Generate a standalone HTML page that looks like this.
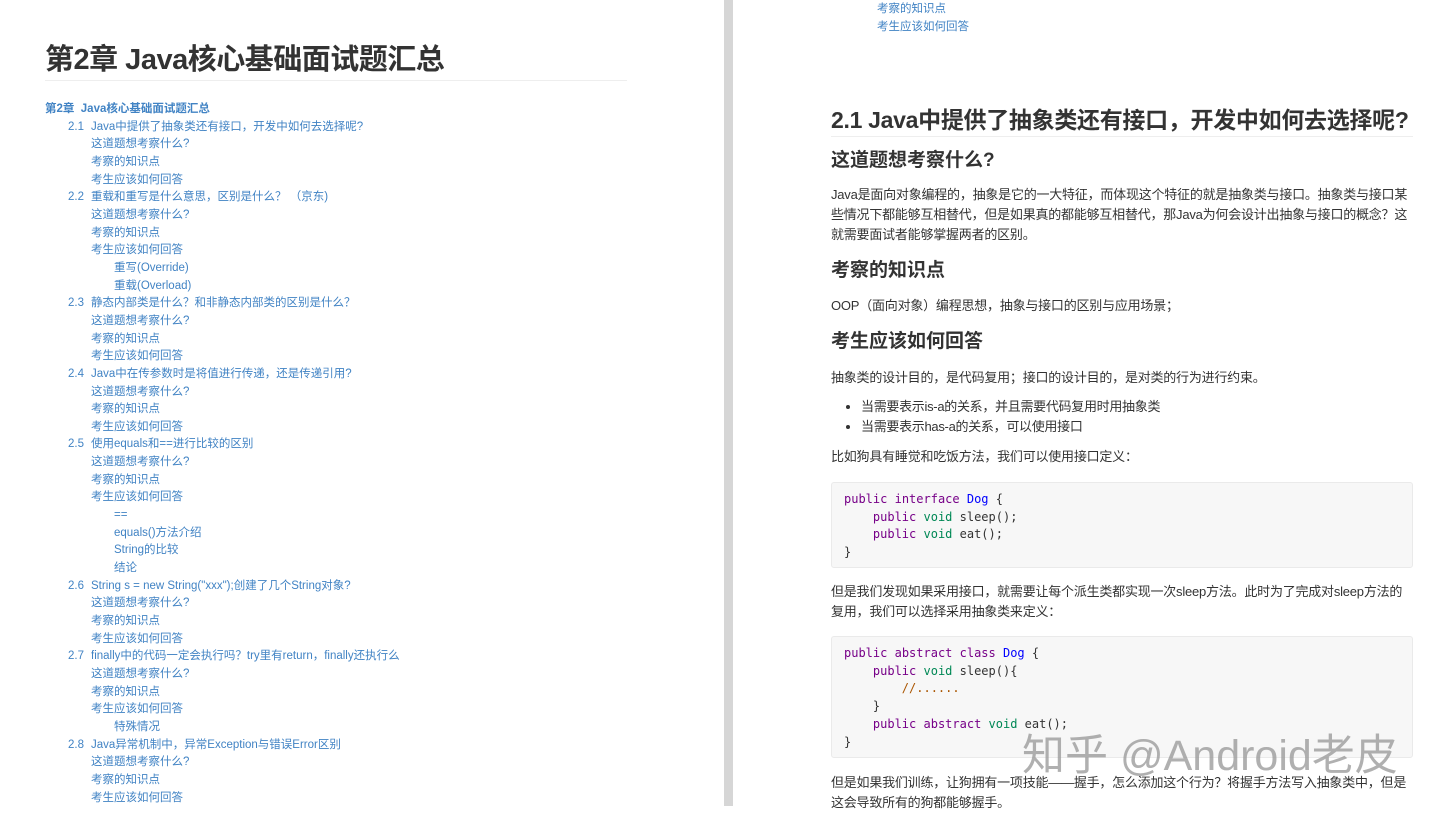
<!DOCTYPE html>
<html><head><meta charset="utf-8"><style>
*{margin:0;padding:0;box-sizing:border-box}
body{width:1440px;height:806px;overflow:hidden;background:#fff;font-family:"Liberation Sans","Noto Sans CJK SC",sans-serif;position:relative}
.bar{position:absolute;left:724px;top:0;width:9px;height:806px;background:#d6d6d6}
h1{position:absolute;left:45px;top:40px;width:582px;font-size:29px;font-weight:bold;color:#333;letter-spacing:-0.5px;border-bottom:1px solid #eee;padding-bottom:0px;line-height:40px}
.toc{position:absolute;left:45px;top:101px;font-size:11.5px;color:#4183c4;line-height:17.65px}
.toc div{white-space:nowrap}
.l0{font-weight:bold}
.l1{padding-left:23px}.l1 span{display:inline-block;width:23px}
.l2{padding-left:46px}.l3{padding-left:69px}
.r{position:absolute;left:831px;width:582px;color:#333}
.rt{position:absolute;left:877px;font-size:11.5px;color:#4183c4;line-height:17.65px}
h2{font-size:23px;font-weight:bold;line-height:32px;border-bottom:1px solid #eee;letter-spacing:-0.3px}
h3{font-size:19px;font-weight:bold;line-height:26px}
p{font-size:13px;line-height:20px;letter-spacing:-0.22px}
ul{font-size:13px;line-height:20px;padding-left:30px;letter-spacing:-0.3px}
pre{position:absolute;left:831px;width:582px;background:#f7f7f7;border:1px solid #eaeaea;border-radius:3px;padding:8px 12px;font-family:"DejaVu Sans Mono","Liberation Mono",monospace;font-size:12px;line-height:17.7px;color:#333}
.k{color:#770088}.t{color:#008855}.d{color:#0000ff}.c{color:#aa5500}
.wm{position:absolute;left:1022px;top:721px;font-size:43px;color:rgba(150,150,150,.75);white-space:nowrap;letter-spacing:0px}
</style></head><body>
<div class="bar"></div>
<h1>第2章 Java核心基础面试题汇总</h1>
<div class="toc">
<div class="l0">第2章 &nbsp;Java核心基础面试题汇总</div>
<div class="l1"><span>2.1</span>Java中提供了抽象类还有接口，开发中如何去选择呢?</div>
<div class="l2">这道题想考察什么?</div><div class="l2">考察的知识点</div><div class="l2">考生应该如何回答</div>
<div class="l1"><span>2.2</span>重载和重写是什么意思，区别是什么？ （京东)</div>
<div class="l2">这道题想考察什么?</div><div class="l2">考察的知识点</div><div class="l2">考生应该如何回答</div>
<div class="l3">重写(Override)</div><div class="l3">重载(Overload)</div>
<div class="l1"><span>2.3</span>静态内部类是什么？和非静态内部类的区别是什么？</div>
<div class="l2">这道题想考察什么?</div><div class="l2">考察的知识点</div><div class="l2">考生应该如何回答</div>
<div class="l1"><span>2.4</span>Java中在传参数时是将值进行传递，还是传递引用?</div>
<div class="l2">这道题想考察什么?</div><div class="l2">考察的知识点</div><div class="l2">考生应该如何回答</div>
<div class="l1"><span>2.5</span>使用equals和==进行比较的区别</div>
<div class="l2">这道题想考察什么?</div><div class="l2">考察的知识点</div><div class="l2">考生应该如何回答</div>
<div class="l3">==</div><div class="l3">equals()方法介绍</div><div class="l3">String的比较</div><div class="l3">结论</div>
<div class="l1"><span>2.6</span>String s = new String("xxx");创建了几个String对象?</div>
<div class="l2">这道题想考察什么?</div><div class="l2">考察的知识点</div><div class="l2">考生应该如何回答</div>
<div class="l1"><span>2.7</span>finally中的代码一定会执行吗？try里有return，finally还执行么</div>
<div class="l2">这道题想考察什么?</div><div class="l2">考察的知识点</div><div class="l2">考生应该如何回答</div>
<div class="l3">特殊情况</div>
<div class="l1"><span>2.8</span>Java异常机制中，异常Exception与错误Error区别</div>
<div class="l2">这道题想考察什么?</div><div class="l2">考察的知识点</div><div class="l2">考生应该如何回答</div>
</div>
<div class="rt" style="top:1px"><div>考察的知识点</div><div>考生应该如何回答</div></div>
<div class="r" style="top:104px"><h2>2.1 Java中提供了抽象类还有接口，开发中如何去选择呢?</h2></div>
<div class="r" style="top:148px"><h3>这道题想考察什么?</h3></div>
<div class="r" style="top:185px"><p>Java是面向对象编程的，抽象是它的一大特征，而体现这个特征的就是抽象类与接口。抽象类与接口某些情况下都能够互相替代，但是如果真的都能够互相替代，那Java为何会设计出抽象与接口的概念？这就需要面试者能够掌握两者的区别。</p></div>
<div class="r" style="top:258px"><h3>考察的知识点</h3></div>
<div class="r" style="top:296px"><p>OOP（面向对象）编程思想，抽象与接口的区别与应用场景；</p></div>
<div class="r" style="top:329px"><h3>考生应该如何回答</h3></div>
<div class="r" style="top:368px"><p>抽象类的设计目的，是代码复用；接口的设计目的，是对类的行为进行约束。</p></div>
<div class="r" style="top:397px"><ul><li>当需要表示is-a的关系，并且需要代码复用时用抽象类</li><li>当需要表示has-a的关系，可以使用接口</li></ul></div>
<div class="r" style="top:447px"><p>比如狗具有睡觉和吃饭方法，我们可以使用接口定义：</p></div>
<pre style="top:482px;height:86px"><span class="k">public</span> <span class="k">interface</span> <span class="d">Dog</span> {
    <span class="k">public</span> <span class="t">void</span> sleep();
    <span class="k">public</span> <span class="t">void</span> eat();
}</pre>
<div class="r" style="top:582px"><p>但是我们发现如果采用接口，就需要让每个派生类都实现一次sleep方法。此时为了完成对sleep方法的复用，我们可以选择采用抽象类来定义：</p></div>
<pre style="top:636px;height:122px"><span class="k">public</span> <span class="k">abstract</span> <span class="k">class</span> <span class="d">Dog</span> {
    <span class="k">public</span> <span class="t">void</span> sleep(){
        <span class="c">//......</span>
    }
    <span class="k">public</span> <span class="k">abstract</span> <span class="t">void</span> eat();
}</pre>
<div class="wm">知乎 @Android老皮</div>
<div class="r" style="top:773px"><p>但是如果我们训练，让狗拥有一项技能——握手，怎么添加这个行为？将握手方法写入抽象类中，但是这会导致所有的狗都能够握手。</p></div>
</body></html>
